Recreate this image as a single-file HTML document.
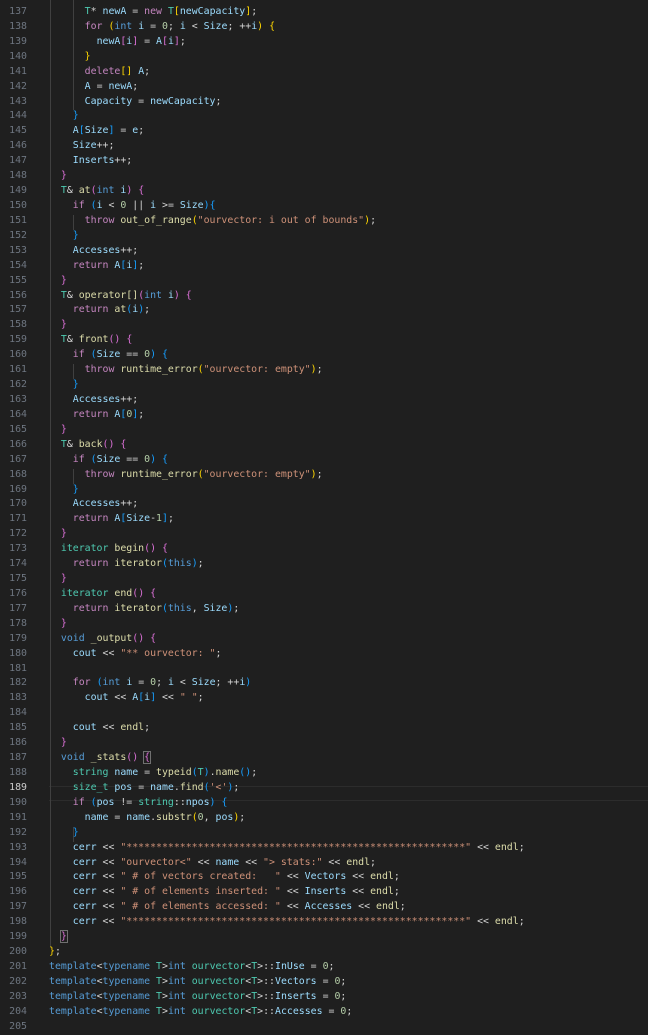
<!DOCTYPE html>
<html><head><meta charset="utf-8"><style>
html,body{margin:0;padding:0;background:#1f1f1f;width:648px;height:1024px;overflow:hidden}
#g{position:absolute;left:0;top:5px;width:27px;text-align:right;font:9.9px/14.925px "DejaVu Sans Mono","Liberation Mono",monospace;color:#6e7681;white-space:pre}
#c{position:absolute;left:49px;top:5px;font:9.9px/14.925px "DejaVu Sans Mono","Liberation Mono",monospace;color:#d4d4d4;white-space:pre}
.k{color:#c586c0}.t{color:#569cd6}.v{color:#9cdcfe}.y{color:#4ec9b0}.f{color:#dcdcaa}.n{color:#b5cea8}.s{color:#ce9178}
.b1{color:#ffd700}.b2{color:#da70d6}.b3{color:#179fff}
#cur{position:absolute;left:49px;right:0;top:786px;height:13px;border-top:1px solid #2c2c2c;border-bottom:1px solid #2c2c2c}
.gd{position:absolute;width:1px;background:#404040}
.bx{outline:1px solid #707070}
</style></head><body>
<div id="cur"></div>
<div class="gd" style="left:50px;top:0;height:947px"></div>
<div class="gd" style="left:73px;top:0;height:110px"></div>
<div class="gd" style="left:73px;top:215px;height:15px"></div>
<div class="gd" style="left:73px;top:364px;height:15px"></div>
<div class="gd" style="left:73px;top:469px;height:15px"></div>
<div class="gd" style="left:73px;top:827px;height:15px"></div>
<div id="g">137
138
139
140
141
142
143
144
145
146
147
148
149
150
151
152
153
154
155
156
157
158
159
160
161
162
163
164
165
166
167
168
169
170
171
172
173
174
175
176
177
178
179
180
181
182
183
184
185
186
187
188
<span style="color:#ccc">189</span>
190
191
192
193
194
195
196
197
198
199
200
201
202
203
204
205</div>
<div id="c">      <span class="y">T</span>* <span class="v">newA</span> = <span class="k">new</span> <span class="y">T</span><span class="b1">[</span><span class="v">newCapacity</span><span class="b1">]</span>;
      <span class="k">for</span> <span class="b1">(</span><span class="t">int</span> <span class="v">i</span> = <span class="n">0</span>; <span class="v">i</span> &lt; <span class="v">Size</span>; ++<span class="v">i</span><span class="b1">)</span> <span class="b1">{</span>
        <span class="v">newA</span><span class="b2">[</span><span class="v">i</span><span class="b2">]</span> = <span class="v">A</span><span class="b2">[</span><span class="v">i</span><span class="b2">]</span>;
      <span class="b1">}</span>
      <span class="k">delete</span><span class="b1">[]</span> <span class="v">A</span>;
      <span class="v">A</span> = <span class="v">newA</span>;
      <span class="v">Capacity</span> = <span class="v">newCapacity</span>;
    <span class="b3">}</span>
    <span class="v">A</span><span class="b3">[</span><span class="v">Size</span><span class="b3">]</span> = <span class="v">e</span>;
    <span class="v">Size</span>++;
    <span class="v">Inserts</span>++;
  <span class="b2">}</span>
  <span class="y">T</span>&amp; <span class="f">at</span><span class="b2">(</span><span class="t">int</span> <span class="v">i</span><span class="b2">)</span> <span class="b2">{</span>
    <span class="k">if</span> <span class="b3">(</span><span class="v">i</span> &lt; <span class="n">0</span> || <span class="v">i</span> &gt;= <span class="v">Size</span><span class="b3">)</span><span class="b3">{</span>
      <span class="k">throw</span> <span class="f">out_of_range</span><span class="b1">(</span><span class="s">"ourvector: i out of bounds"</span><span class="b1">)</span>;
    <span class="b3">}</span>
    <span class="v">Accesses</span>++;
    <span class="k">return</span> <span class="v">A</span><span class="b3">[</span><span class="v">i</span><span class="b3">]</span>;
  <span class="b2">}</span>
  <span class="y">T</span>&amp; <span class="f">operator[]</span><span class="b2">(</span><span class="t">int</span> <span class="v">i</span><span class="b2">)</span> <span class="b2">{</span>
    <span class="k">return</span> <span class="f">at</span><span class="b3">(</span><span class="v">i</span><span class="b3">)</span>;
  <span class="b2">}</span>
  <span class="y">T</span>&amp; <span class="f">front</span><span class="b2">()</span> <span class="b2">{</span>
    <span class="k">if</span> <span class="b3">(</span><span class="v">Size</span> == <span class="n">0</span><span class="b3">)</span> <span class="b3">{</span>
      <span class="k">throw</span> <span class="f">runtime_error</span><span class="b1">(</span><span class="s">"ourvector: empty"</span><span class="b1">)</span>;
    <span class="b3">}</span>
    <span class="v">Accesses</span>++;
    <span class="k">return</span> <span class="v">A</span><span class="b3">[</span><span class="n">0</span><span class="b3">]</span>;
  <span class="b2">}</span>
  <span class="y">T</span>&amp; <span class="f">back</span><span class="b2">()</span> <span class="b2">{</span>
    <span class="k">if</span> <span class="b3">(</span><span class="v">Size</span> == <span class="n">0</span><span class="b3">)</span> <span class="b3">{</span>
      <span class="k">throw</span> <span class="f">runtime_error</span><span class="b1">(</span><span class="s">"ourvector: empty"</span><span class="b1">)</span>;
    <span class="b3">}</span>
    <span class="v">Accesses</span>++;
    <span class="k">return</span> <span class="v">A</span><span class="b3">[</span><span class="v">Size</span>-<span class="n">1</span><span class="b3">]</span>;
  <span class="b2">}</span>
  <span class="y">iterator</span> <span class="f">begin</span><span class="b2">()</span> <span class="b2">{</span>
    <span class="k">return</span> <span class="f">iterator</span><span class="b3">(</span><span class="t">this</span><span class="b3">)</span>;
  <span class="b2">}</span>
  <span class="y">iterator</span> <span class="f">end</span><span class="b2">()</span> <span class="b2">{</span>
    <span class="k">return</span> <span class="f">iterator</span><span class="b3">(</span><span class="t">this</span>, <span class="v">Size</span><span class="b3">)</span>;
  <span class="b2">}</span>
  <span class="t">void</span> <span class="f">_output</span><span class="b2">()</span> <span class="b2">{</span>
    <span class="v">cout</span> &lt;&lt; <span class="s">"** ourvector: "</span>;

    <span class="k">for</span> <span class="b3">(</span><span class="t">int</span> <span class="v">i</span> = <span class="n">0</span>; <span class="v">i</span> &lt; <span class="v">Size</span>; ++<span class="v">i</span><span class="b3">)</span>
      <span class="v">cout</span> &lt;&lt; <span class="v">A</span><span class="b3">[</span><span class="v">i</span><span class="b3">]</span> &lt;&lt; <span class="s">" "</span>;

    <span class="v">cout</span> &lt;&lt; <span class="f">endl</span>;
  <span class="b2">}</span>
  <span class="t">void</span> <span class="f">_stats</span><span class="b2">()</span> <span class="b2 bx">{</span>
    <span class="y">string</span> <span class="v">name</span> = <span class="f">typeid</span><span class="b3">(</span><span class="y">T</span><span class="b3">)</span>.<span class="f">name</span><span class="b3">()</span>;
    <span class="y">size_t</span> <span class="v">pos</span> = <span class="v">name</span>.<span class="f">find</span><span class="b3">(</span><span class="s">'&lt;'</span><span class="b3">)</span>;
    <span class="k">if</span> <span class="b3">(</span><span class="v">pos</span> != <span class="y">string</span>::<span class="v">npos</span><span class="b3">)</span> <span class="b3">{</span>
      <span class="v">name</span> = <span class="v">name</span>.<span class="f">substr</span><span class="b1">(</span><span class="n">0</span>, <span class="v">pos</span><span class="b1">)</span>;
    <span class="b3">}</span>
    <span class="v">cerr</span> &lt;&lt; <span class="s">"*********************************************************"</span> &lt;&lt; <span class="f">endl</span>;
    <span class="v">cerr</span> &lt;&lt; <span class="s">"ourvector&lt;"</span> &lt;&lt; <span class="v">name</span> &lt;&lt; <span class="s">"&gt; stats:"</span> &lt;&lt; <span class="f">endl</span>;
    <span class="v">cerr</span> &lt;&lt; <span class="s">" # of vectors created:   "</span> &lt;&lt; <span class="v">Vectors</span> &lt;&lt; <span class="f">endl</span>;
    <span class="v">cerr</span> &lt;&lt; <span class="s">" # of elements inserted: "</span> &lt;&lt; <span class="v">Inserts</span> &lt;&lt; <span class="f">endl</span>;
    <span class="v">cerr</span> &lt;&lt; <span class="s">" # of elements accessed: "</span> &lt;&lt; <span class="v">Accesses</span> &lt;&lt; <span class="f">endl</span>;
    <span class="v">cerr</span> &lt;&lt; <span class="s">"*********************************************************"</span> &lt;&lt; <span class="f">endl</span>;
  <span class="b2 bx">}</span>
<span class="b1">}</span>;
<span class="t">template</span>&lt;<span class="t">typename</span> <span class="y">T</span>&gt;<span class="t">int</span> <span class="y">ourvector</span>&lt;<span class="y">T</span>&gt;::<span class="v">InUse</span> = <span class="n">0</span>;
<span class="t">template</span>&lt;<span class="t">typename</span> <span class="y">T</span>&gt;<span class="t">int</span> <span class="y">ourvector</span>&lt;<span class="y">T</span>&gt;::<span class="v">Vectors</span> = <span class="n">0</span>;
<span class="t">template</span>&lt;<span class="t">typename</span> <span class="y">T</span>&gt;<span class="t">int</span> <span class="y">ourvector</span>&lt;<span class="y">T</span>&gt;::<span class="v">Inserts</span> = <span class="n">0</span>;
<span class="t">template</span>&lt;<span class="t">typename</span> <span class="y">T</span>&gt;<span class="t">int</span> <span class="y">ourvector</span>&lt;<span class="y">T</span>&gt;::<span class="v">Accesses</span> = <span class="n">0</span>;
</div>
</body></html>
